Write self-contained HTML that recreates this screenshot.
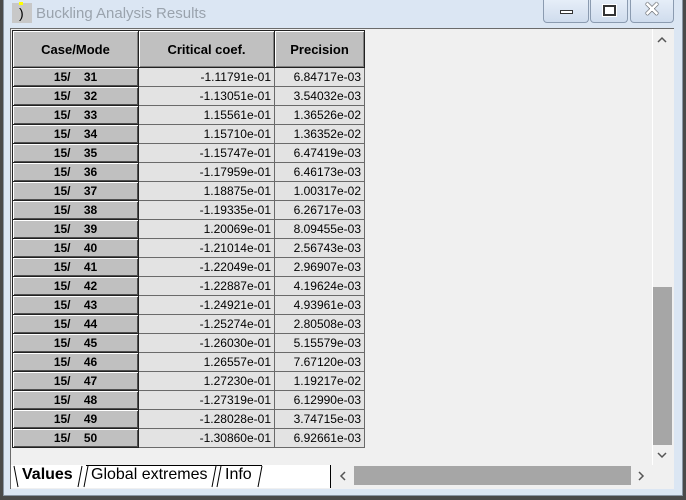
<!DOCTYPE html>
<html><head><style>
*{margin:0;padding:0;box-sizing:border-box}
body{width:686px;height:500px;position:relative;overflow:hidden;background:#4a4a4a;font-family:"Liberation Sans",Arial,sans-serif}
.a{position:absolute}
.frame{left:3px;top:0;width:680px;height:496px;background:#dbe6f3;border:1px solid #8a96a4;border-top:none}
.client{left:10px;top:28px;width:664px;height:461px;background:#f0f0f0;border-top:1px solid #6b6b6b;border-left:1px solid #6b6b6b}
.btn{top:0;height:23px;border:1px solid #8b9bb0;border-top:none;border-radius:0 0 4px 4px;background:linear-gradient(#e6eef8,#cfdced)}
table{position:absolute;left:12px;top:30px;border-collapse:collapse;font-size:12px}
td{height:19px;border:1px solid #6a6a6a;padding:0 3px;font-family:"Liberation Sans",Arial,sans-serif}
th{height:37px;background:#c0c0c0;border:1px solid #222;box-shadow:inset 1px 1px #fff,inset -1px -1px #808080;font-size:13px;font-weight:bold}
td.c{background:#c0c0c0;font-weight:bold;text-align:center;box-shadow:inset 1px 1px #fff,inset -1px -1px #505050;border-color:#222;font-size:12px}
td.v{background:#e3e3e3;text-align:right;font-size:12px}
</style></head><body>
<div class="a frame"></div>
<div class="a" style="left:12px;top:3px;width:20px;height:20px;background:#c8c8c8"></div>
<div class="a" style="left:19px;top:5px;font-size:14px;color:#000">)</div>
<div class="a" style="left:19px;top:2px;width:4px;height:3px;background:#ff0"></div>
<div class="a" style="left:36px;top:5px;font-size:15px;color:#9aa3ad">Buckling Analysis Results</div>
<div class="a btn" style="left:543px;width:46px"><div class="a" style="left:16px;top:10px;width:13px;height:4px;border:1px solid #333;background:#fff"></div></div>
<div class="a btn" style="left:590px;width:38px"><div class="a" style="left:12px;top:5px;width:13px;height:11px;border:2px solid #333;background:#fff;box-shadow:0 0 0 1px #fff"></div></div>
<div class="a btn" style="left:630px;width:44px;font-size:20px;font-weight:bold;color:#fff;text-align:center;line-height:20px;text-shadow:0 0 1px #222,0 0 1px #222,0 0 1px #222">✕</div>
<div class="a client"></div>
<table>
<tr><th style="width:126px">Case/Mode</th><th style="width:136px">Critical coef.</th><th style="width:90px">Precision</th></tr>
<tr><td class="c">15/&nbsp;&nbsp;&nbsp;&nbsp;31</td><td class="v">-1.11791e-01</td><td class="v">6.84717e-03</td></tr>
<tr><td class="c">15/&nbsp;&nbsp;&nbsp;&nbsp;32</td><td class="v">-1.13051e-01</td><td class="v">3.54032e-03</td></tr>
<tr><td class="c">15/&nbsp;&nbsp;&nbsp;&nbsp;33</td><td class="v">1.15561e-01</td><td class="v">1.36526e-02</td></tr>
<tr><td class="c">15/&nbsp;&nbsp;&nbsp;&nbsp;34</td><td class="v">1.15710e-01</td><td class="v">1.36352e-02</td></tr>
<tr><td class="c">15/&nbsp;&nbsp;&nbsp;&nbsp;35</td><td class="v">-1.15747e-01</td><td class="v">6.47419e-03</td></tr>
<tr><td class="c">15/&nbsp;&nbsp;&nbsp;&nbsp;36</td><td class="v">-1.17959e-01</td><td class="v">6.46173e-03</td></tr>
<tr><td class="c">15/&nbsp;&nbsp;&nbsp;&nbsp;37</td><td class="v">1.18875e-01</td><td class="v">1.00317e-02</td></tr>
<tr><td class="c">15/&nbsp;&nbsp;&nbsp;&nbsp;38</td><td class="v">-1.19335e-01</td><td class="v">6.26717e-03</td></tr>
<tr><td class="c">15/&nbsp;&nbsp;&nbsp;&nbsp;39</td><td class="v">1.20069e-01</td><td class="v">8.09455e-03</td></tr>
<tr><td class="c">15/&nbsp;&nbsp;&nbsp;&nbsp;40</td><td class="v">-1.21014e-01</td><td class="v">2.56743e-03</td></tr>
<tr><td class="c">15/&nbsp;&nbsp;&nbsp;&nbsp;41</td><td class="v">-1.22049e-01</td><td class="v">2.96907e-03</td></tr>
<tr><td class="c">15/&nbsp;&nbsp;&nbsp;&nbsp;42</td><td class="v">-1.22887e-01</td><td class="v">4.19624e-03</td></tr>
<tr><td class="c">15/&nbsp;&nbsp;&nbsp;&nbsp;43</td><td class="v">-1.24921e-01</td><td class="v">4.93961e-03</td></tr>
<tr><td class="c">15/&nbsp;&nbsp;&nbsp;&nbsp;44</td><td class="v">-1.25274e-01</td><td class="v">2.80508e-03</td></tr>
<tr><td class="c">15/&nbsp;&nbsp;&nbsp;&nbsp;45</td><td class="v">-1.26030e-01</td><td class="v">5.15579e-03</td></tr>
<tr><td class="c">15/&nbsp;&nbsp;&nbsp;&nbsp;46</td><td class="v">1.26557e-01</td><td class="v">7.67120e-03</td></tr>
<tr><td class="c">15/&nbsp;&nbsp;&nbsp;&nbsp;47</td><td class="v">1.27230e-01</td><td class="v">1.19217e-02</td></tr>
<tr><td class="c">15/&nbsp;&nbsp;&nbsp;&nbsp;48</td><td class="v">-1.27319e-01</td><td class="v">6.12990e-03</td></tr>
<tr><td class="c">15/&nbsp;&nbsp;&nbsp;&nbsp;49</td><td class="v">-1.28028e-01</td><td class="v">3.74715e-03</td></tr>
<tr><td class="c">15/&nbsp;&nbsp;&nbsp;&nbsp;50</td><td class="v">-1.30860e-01</td><td class="v">6.92661e-03</td></tr>
</table>
<!-- vertical scrollbar -->
<div class="a" style="left:652px;top:29px;width:21px;height:436px;background:#f0f0f0;border-left:1px solid #fff"></div>
<svg class="a" style="left:656px;top:36px" width="12" height="8"><path d="M2 6 L6 2 L10 6" stroke="#555" stroke-width="1.5" fill="none"/></svg>
<div class="a" style="left:653px;top:287px;width:19px;height:158px;background:#a6a6a6"></div>
<svg class="a" style="left:656px;top:451px" width="12" height="8"><path d="M2 2 L6 6 L10 2" stroke="#555" stroke-width="1.5" fill="none"/></svg>
<!-- tabs -->
<div class="a" style="left:11px;top:465px;width:320px;height:23px;background:#fff;border-right:1px solid #000"></div>
<svg class="a" style="left:11px;top:464px" width="260" height="24">
<path d="M3 2 L7 23 M71 2 L67 23 M77 2 L73 23 M205 2 L201 23 M210 2 L206 23 M251 2 L247 23 M75 1.5 L251 1.5" stroke="#000" fill="none"/>
</svg>
<div class="a" style="left:22px;top:466px;font-size:16px;font-weight:bold">Values</div>
<div class="a" style="left:91px;top:466px;font-size:16px">Global extremes</div>
<div class="a" style="left:225px;top:466px;font-size:16px">Info</div>
<!-- horizontal scrollbar -->
<div class="a" style="left:332px;top:465px;width:320px;height:23px;background:#f0f0f0"></div>
<svg class="a" style="left:338px;top:470px" width="10" height="12"><path d="M7 2 L3 6 L7 10" stroke="#555" stroke-width="1.5" fill="none"/></svg>
<div class="a" style="left:354px;top:466px;width:277px;height:19px;background:#a6a6a6"></div>
<svg class="a" style="left:636px;top:470px" width="10" height="12"><path d="M3 2 L7 6 L3 10" stroke="#555" stroke-width="1.5" fill="none"/></svg>
</body></html>
